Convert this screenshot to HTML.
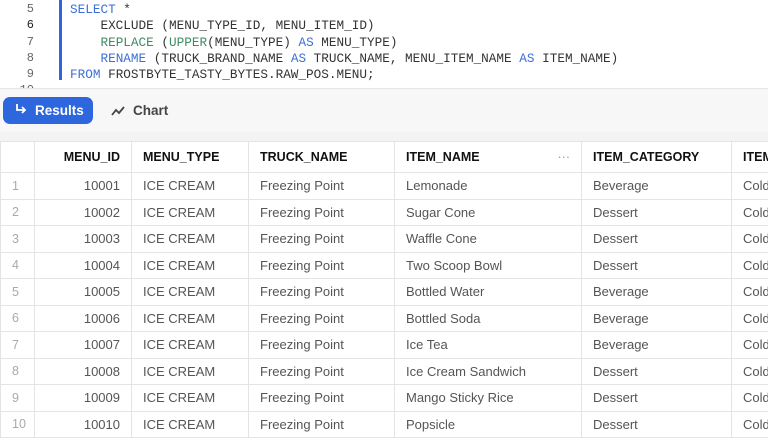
<html><head><style>
body{margin:0;width:768px;height:437px;overflow:hidden;background:#fff;font-family:"Liberation Sans",sans-serif;position:relative}
.code{position:absolute;left:0;top:0;width:768px;height:88px;background:#fff;overflow:hidden;font-family:"Liberation Mono",monospace;font-size:12.7px}
.ln{position:absolute;left:0;width:34px;text-align:right;color:#666;font-size:12px}
.cl{position:absolute;left:70px;color:#333;white-space:pre}
.k{color:#3b6fd6}.g{color:#3f8a63}
.bar{position:absolute;left:59px;top:0;width:3px;height:80px;background:#2f66e0}
.tabs{position:absolute;left:0;top:88px;width:768px;height:43px;background:#f7f7f7;border-top:1px solid #e6e6e6;border-bottom:1px solid #e3e3e3}
.btn{position:absolute;left:3px;top:8px;width:90px;height:27px;border-radius:7px;background:#2d66dd;color:#fff;font-size:13.5px;font-weight:bold;line-height:27px}
.chart{position:absolute;left:111px;top:8px;height:27px;line-height:27px;color:#444;font-size:13.5px;font-weight:bold}
.gap{position:absolute;left:0;top:132px;width:768px;height:9px;background:#f3f3f3}
table{position:absolute;left:0;top:141px;border-collapse:collapse;table-layout:fixed;width:800px}
td,th{border:1px solid #e4e4e4;height:26.5px;padding:0 11px;font-size:13px;color:#555;white-space:nowrap;overflow:hidden}
th{height:31px;color:#111;font-size:12.5px;text-align:left}
td.n{color:#aaa;padding-left:11px;font-size:12.5px}
.r{text-align:right}
</style></head><body>
<div class="code">
<div class="bar"></div>
<div class="ln" style="top:2px">5</div><div class="cl" style="top:2px"><span class="k">SELECT</span> *</div>
<div class="ln" style="top:18px;color:#222">6</div><div class="cl" style="top:18px">    EXCLUDE (MENU_TYPE_ID, MENU_ITEM_ID)</div>
<div class="ln" style="top:35px">7</div><div class="cl" style="top:35px">    <span class="g">REPLACE</span> (<span class="g">UPPER</span>(MENU_TYPE) <span class="k">AS</span> MENU_TYPE)</div>
<div class="ln" style="top:51px">8</div><div class="cl" style="top:51px">    <span class="k">RENAME</span> (TRUCK_BRAND_NAME <span class="k">AS</span> TRUCK_NAME, MENU_ITEM_NAME <span class="k">AS</span> ITEM_NAME)</div>
<div class="ln" style="top:67px">9</div><div class="cl" style="top:67px"><span class="k">FROM</span> FROSTBYTE_TASTY_BYTES.RAW_POS.MENU;</div>
<div class="ln" style="top:83px">10</div>
</div>
<div class="tabs">
<div class="btn"><svg width="14" height="14" viewBox="0 0 14 14" style="position:absolute;left:11px;top:6px"><path d="M3 1v6h8M8 4l3 3-3 3" fill="none" stroke="#fff" stroke-width="1.8"/></svg><span style="position:absolute;left:32px">Results</span></div>
<div class="chart"><svg width="14" height="12" viewBox="0 0 14 12" style="position:absolute;left:0;top:8px"><path d="M1 10l4-5 3 3 5-6" fill="none" stroke="#444" stroke-width="1.8"/></svg><span style="margin-left:22px">Chart</span></div>
</div>
<div class="gap"></div>
<table>
<colgroup><col style="width:34px"><col style="width:97px"><col style="width:117px"><col style="width:146px"><col style="width:187px"><col style="width:150px"><col style="width:69px"></colgroup>
<tr><th></th><th class="r">MENU_ID</th><th>MENU_TYPE</th><th>TRUCK_NAME</th><th>ITEM_NAME<span style="float:right;color:#999;font-weight:normal">···</span></th><th>ITEM_CATEGORY</th><th>ITEM_SUBCATEGORY</th></tr>
<tr><td class="n">1</td><td class="r">10001</td><td>ICE CREAM</td><td>Freezing Point</td><td>Lemonade</td><td>Beverage</td><td>Cold Option</td></tr>
<tr><td class="n">2</td><td class="r">10002</td><td>ICE CREAM</td><td>Freezing Point</td><td>Sugar Cone</td><td>Dessert</td><td>Cold Option</td></tr>
<tr><td class="n">3</td><td class="r">10003</td><td>ICE CREAM</td><td>Freezing Point</td><td>Waffle Cone</td><td>Dessert</td><td>Cold Option</td></tr>
<tr><td class="n">4</td><td class="r">10004</td><td>ICE CREAM</td><td>Freezing Point</td><td>Two Scoop Bowl</td><td>Dessert</td><td>Cold Option</td></tr>
<tr><td class="n">5</td><td class="r">10005</td><td>ICE CREAM</td><td>Freezing Point</td><td>Bottled Water</td><td>Beverage</td><td>Cold Option</td></tr>
<tr><td class="n">6</td><td class="r">10006</td><td>ICE CREAM</td><td>Freezing Point</td><td>Bottled Soda</td><td>Beverage</td><td>Cold Option</td></tr>
<tr><td class="n">7</td><td class="r">10007</td><td>ICE CREAM</td><td>Freezing Point</td><td>Ice Tea</td><td>Beverage</td><td>Cold Option</td></tr>
<tr><td class="n">8</td><td class="r">10008</td><td>ICE CREAM</td><td>Freezing Point</td><td>Ice Cream Sandwich</td><td>Dessert</td><td>Cold Option</td></tr>
<tr><td class="n">9</td><td class="r">10009</td><td>ICE CREAM</td><td>Freezing Point</td><td>Mango Sticky Rice</td><td>Dessert</td><td>Cold Option</td></tr>
<tr><td class="n">10</td><td class="r">10010</td><td>ICE CREAM</td><td>Freezing Point</td><td>Popsicle</td><td>Dessert</td><td>Cold Option</td></tr>
</table>
</body></html>
